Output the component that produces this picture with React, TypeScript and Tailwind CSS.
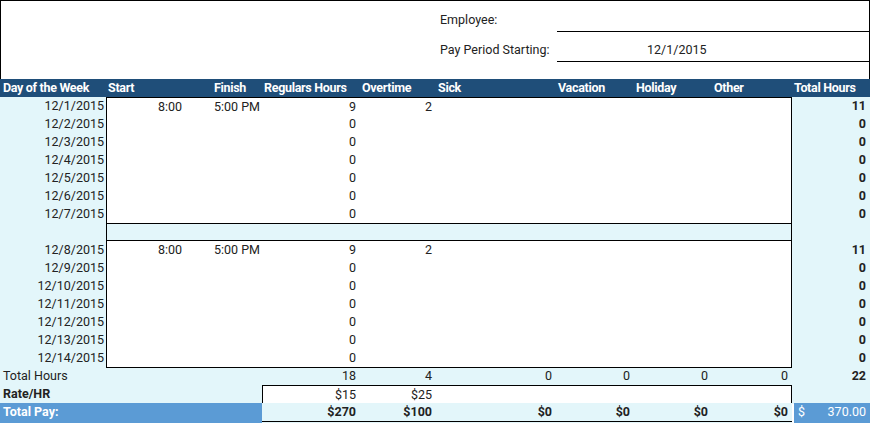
const cols = "grid grid-cols-[106px_80px_76px_98px_76px_120px_78px_78px_80px_78px]";

const heads = ["Day of the Week", "Start", "Finish", "Regulars Hours", "Overtime", "Sick", "Vacation", "Holiday", "Other", "Total Hours"];

type Day = { d: string; s?: string; f?: string; r: string; o?: string; t: string };
const week1: Day[] = [
  { d: "12/1/2015", s: "8:00", f: "5:00 PM", r: "9", o: "2", t: "11" },
  ...["12/2/2015", "12/3/2015", "12/4/2015", "12/5/2015", "12/6/2015", "12/7/2015"].map((d) => ({ d, r: "0", t: "0" })),
];
const week2: Day[] = [
  { d: "12/8/2015", s: "8:00", f: "5:00 PM", r: "9", o: "2", t: "11" },
  ...["12/9/2015", "12/10/2015", "12/11/2015", "12/12/2015", "12/13/2015", "12/14/2015"].map((d) => ({ d, r: "0", t: "0" })),
];

function DayRow({ day, first, last }: { day: Day; first: boolean; last: boolean }) {
  const edge = `${first ? "border-t border-t-black" : ""} ${last ? "border-b border-b-black" : ""}`;
  return (
    <div className={`${cols} h-[18px] leading-[18px]`}>
      <div className="bg-[#e3f6fa] pr-[2px] text-right">{day.d}</div>
      <div className={`border-l border-l-black bg-white pr-1 text-right ${edge}`}>{day.s}</div>
      <div className={`bg-white pl-[28px] ${edge}`}>{day.f}</div>
      <div className={`bg-white pr-1 text-right ${edge}`}>{day.r}</div>
      <div className={`bg-white pr-1 text-right ${edge}`}>{day.o}</div>
      <div className={`bg-white ${edge}`} />
      <div className={`bg-white ${edge}`} />
      <div className={`bg-white ${edge}`} />
      <div className={`border-r border-r-black bg-white ${edge}`} />
      <div className="bg-[#e3f6fa] pr-1 text-right font-bold">{day.t}</div>
    </div>
  );
}

export default function App() {
  return (
    <div className="h-[423px] w-[870px] overflow-hidden bg-white text-[12.5px] text-[#222]" style={{ fontFamily: "Roboto, 'Liberation Sans', sans-serif" }}>
      <div className="relative h-[79px] border-x border-t border-black">
        <div className="absolute left-[439px] top-[10px]">Employee:</div>
        <div className="absolute left-[556px] right-0 top-[30px] border-b border-black" />
        <div className="absolute left-[439px] top-[40px]">Pay Period Starting:</div>
        <div className="absolute left-[646px] top-[40px]">12/1/2015</div>
        <div className="absolute left-[556px] right-0 top-[60px] border-b border-black" />
      </div>
      <div className={`${cols} h-[18px] bg-[#1f4e79] font-bold leading-[18px] tracking-tight text-white`}>
        {heads.map((h, i) => (
          <div key={h} className={i === 2 ? "pl-[28px]" : i === 0 ? "pl-[3px] whitespace-nowrap" : "pl-[2px] whitespace-nowrap"}>
            {h}
          </div>
        ))}
      </div>
      {week1.map((d, i) => (
        <DayRow key={d.d} day={d} first={i === 0} last={false} />
      ))}
      <div className={`${cols} h-[18px]`}>
        <div className="bg-[#e3f6fa]" />
        <div className="col-span-8 border border-black bg-[#e3f6fa]" />
        <div className="bg-[#e3f6fa]" />
      </div>
      {week2.map((d, i) => (
        <DayRow key={d.d} day={d} first={false} last={i === 6} />
      ))}
      <div className={`${cols} h-[18px] bg-[#e3f6fa] leading-[18px]`}>
        <div className="pl-[3px] whitespace-nowrap">Total Hours</div>
        <div />
        <div />
        <div className="pr-1 text-right">18</div>
        <div className="pr-1 text-right">4</div>
        <div className="pr-1 text-right">0</div>
        <div className="pr-1 text-right">0</div>
        <div className="pr-1 text-right">0</div>
        <div className="pr-1 text-right">0</div>
        <div className="pr-1 text-right font-bold">22</div>
      </div>
      <div className={`${cols} h-[18px] leading-[18px]`}>
        <div className="col-span-3 bg-[#e3f6fa] pl-[3px] font-bold">Rate/HR</div>
        <div className="border-l border-t border-black bg-white pr-1 text-right">$15</div>
        <div className="border-t border-black bg-white pr-1 text-right">$25</div>
        <div className="col-span-4 border-r border-t border-black bg-white" />
        <div className="bg-[#e3f6fa]" />
      </div>
      <div className={`${cols} h-[19px] font-bold leading-[18px]`}>
        <div className="col-span-3 bg-[#5b9bd5] pl-[3px] text-white">Total Pay:</div>
        <div className="border-b-[3px] border-double border-black bg-[#e3f6fa] pr-1 text-right">$270</div>
        <div className="border-b-[3px] border-double border-black bg-[#e3f6fa] pr-1 text-right">$100</div>
        <div className="border-b-[3px] border-double border-black bg-[#e3f6fa] pr-1 text-right">$0</div>
        <div className="border-b-[3px] border-double border-black bg-[#e3f6fa] pr-1 text-right">$0</div>
        <div className="border-b-[3px] border-double border-black bg-[#e3f6fa] pr-1 text-right">$0</div>
        <div className="border-b-[3px] border-double border-black bg-[#e3f6fa] pr-1 text-right">$0</div>
        <div className="ml-[2px] flex justify-between bg-[#5b9bd5] px-1 font-normal text-white">
          <span>$</span>
          <span>370.00</span>
        </div>
      </div>
    </div>
  );
}
